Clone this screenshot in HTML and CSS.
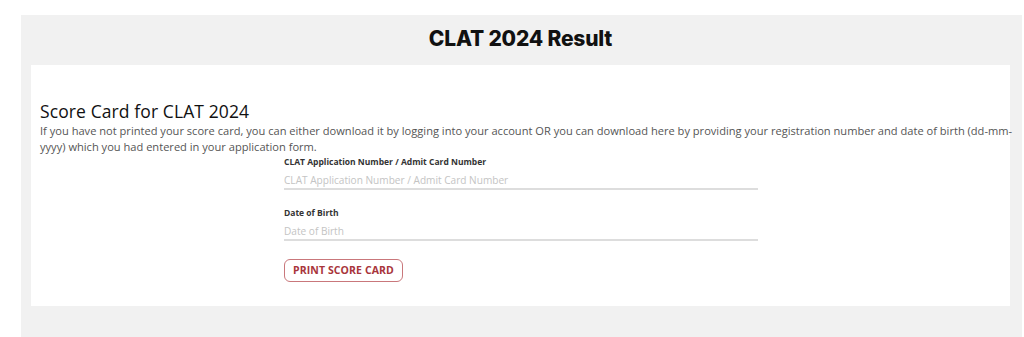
FILE: index.html
```html
<!DOCTYPE html>
<html lang="en">
<head>
    <meta charset="UTF-8">
    <meta name="viewport" content="width=device-width, initial-scale=1.0">
    <title>CLAT 2024 Result</title>
    <link rel="stylesheet" href="styles.css">
</head>
<body>
    <div class="panel">
        <h1 class="panel-title">CLAT 2024 Result</h1>
        <div class="card">
            <h2 class="card-title">Score Card for CLAT 2024</h2>
            <p class="intro">If you have not printed your score card, you can either download it by logging into your account OR you can download here by providing your registration number and date of birth (dd-mm-yyyy) which you had entered in your application form.</p>
            <form class="score-form">
                <label class="field">
                    <span class="field-label">CLAT Application Number / Admit Card Number</span>
                    <input type="text" placeholder="CLAT Application Number / Admit Card Number">
                </label>
                <label class="field">
                    <span class="field-label">Date of Birth</span>
                    <input type="text" placeholder="Date of Birth">
                </label>
                <button type="button" class="print-btn">PRINT SCORE CARD</button>
            </form>
        </div>
    </div>
</body>
</html>
```

FILE: styles.css
```css
body {
    margin: 0;
    background: white;
    font-family: "Open Sans", Arial, sans-serif;
    color: #555;
}
.panel {
    margin: 15px 2px 0 21px;
    padding: 0 12px 31px 10px;
    background-color: #f1f1f1;
}
.panel-title {
    margin: 0;
    padding: 7px 0 10px;
    text-align: center;
    font-family: Inter, "Liberation Sans", sans-serif;
    font-size: 21px;
    font-weight: 800;
    letter-spacing: -0.2px;
    color: #111;
    line-height: 33px;
}
.card {
    background: white;
    padding: 35px 0 23px 9px;
    height: 183px;
}
.card-title {
    margin: 0;
    font-family: "Open Sans", Arial, sans-serif;
    font-size: 17.5px;
    font-weight: 400;
    letter-spacing: 0.1px;
    color: #111;
    line-height: 23px;
}
.intro {
    margin: 0;
    width: 985px;
    font-size: 11.1px;
    line-height: 16px;
    color: #555;
}
.score-form {
    width: 474px;
    margin-left: 244px;
    display: flex;
    flex-direction: column;
    align-items: flex-start;
}
.field {
    display: flex;
    flex-direction: column;
    width: 100%;
    margin-bottom: 16px;
}
.field:last-of-type {
    margin-bottom: 14px;
}
.field-label {
    font-size: 8.5px;
    font-weight: 700;
    color: #333;
    line-height: 13px;
}
.field input {
    border: none;
    border-bottom: 2px solid #ddd;
    padding: 5px 0 1px;
    font-family: "Open Sans", Arial, sans-serif;
    font-size: 10.1px;
    outline: none;
    background: transparent;
}
.field input::placeholder {
    color: #c4c4c4;
}
.print-btn {
    margin-top: 4px;
    padding: 4px 8px;
    background: white;
    border: 1px solid #c9777b;
    border-radius: 6px;
    font-family: "Open Sans", Arial, sans-serif;
    font-size: 10.5px;
    font-weight: 700;
    letter-spacing: 0.1px;
    color: #a8353b;
    line-height: 13px;
}
```
